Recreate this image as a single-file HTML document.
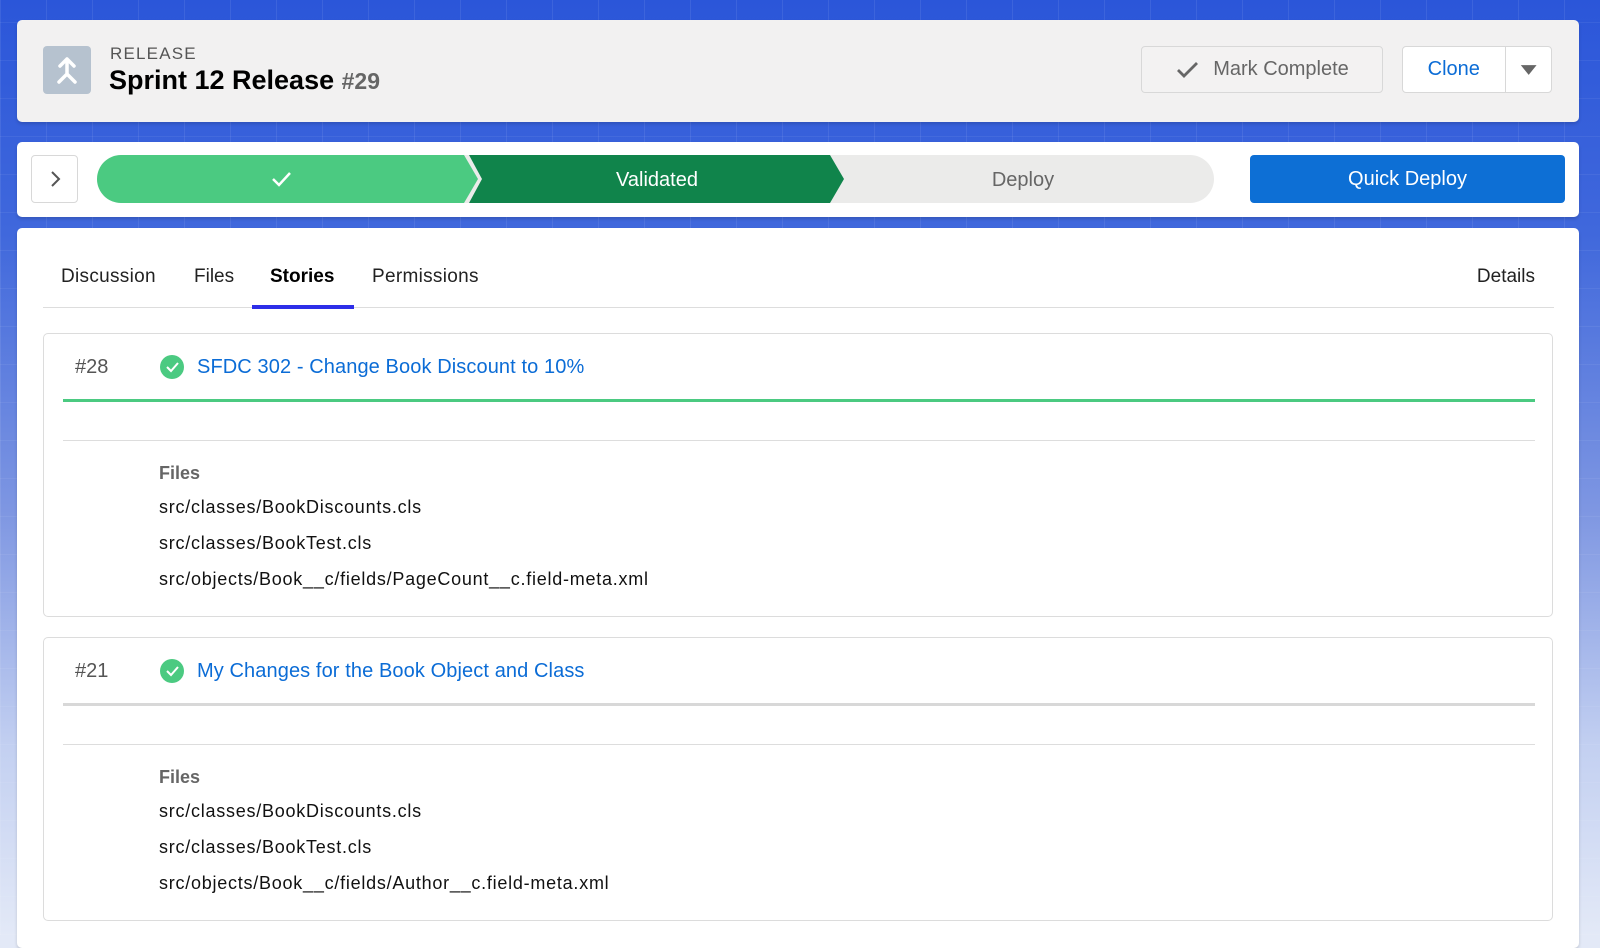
<!DOCTYPE html>
<html style="height:935px;background:#e3e9f7"><head><meta charset="utf-8"><style>
*{box-sizing:border-box;margin:0;padding:0}
body{width:1600px;height:935px;overflow:hidden;font-family:"Liberation Sans",sans-serif;background:linear-gradient(180deg,#2b56d9 0%,#4068dc 25%,#7f97e2 55%,#c3d0f1 80%,#e3e9f7 100%) no-repeat;position:relative}
.bgpat{position:absolute;inset:0;background-image:repeating-linear-gradient(90deg,rgba(255,255,255,.08) 0 1px,transparent 1px 46px),repeating-linear-gradient(0deg,rgba(255,255,255,.06) 0 1px,transparent 1px 38px)}
.card{position:absolute;left:17px;width:1562px;border-radius:5px;box-shadow:0 2px 3px rgba(0,0,0,.15)}
.abs{position:absolute}
.btn{position:absolute;border:1px solid #d8d8d8;border-radius:4px;display:flex;align-items:center;justify-content:center;font-size:20px}
.story{position:absolute;left:43px;width:1510px;height:284px;border:1px solid #dcdcdc;border-radius:5px;background:#fff}
.num{position:absolute;left:31px;font-size:20px;color:#555}
.chk{position:absolute;left:116px;width:24px;height:24px;border-radius:50%;background:#4bca81}
.ttl{position:absolute;left:153px;font-size:20px;color:#0b6cd6;letter-spacing:.1px}
.fl{position:absolute;left:115px;font-size:18px;color:#111;letter-spacing:.75px}
</style></head><body>
<div class="bgpat"></div>

<div class="card" style="top:20px;height:102px;background:#f2f1f1">
  <div class="abs" style="left:26px;top:26px;width:48px;height:48px;background:#b6c2cf;border-radius:4px">
    <svg width="48" height="48" viewBox="0 0 48 48"><path d="M24 13v15M17 20l7-7 7 7M24 28l-8 8M24 28l8 8" stroke="#fff" stroke-width="3.5" fill="none" stroke-linecap="round" stroke-linejoin="round"/></svg>
  </div>
  <div class="abs" style="left:93px;top:24px;font-size:17px;letter-spacing:1.2px;color:#555">RELEASE</div>
  <div class="abs" style="left:92px;top:45px;font-size:27px;font-weight:bold;color:#000">Sprint 12 Release <span style="font-size:23px;color:#666">#29</span></div>
  <div class="btn" style="left:1124px;top:26px;width:242px;height:47px;background:#f3f2f2;color:#666"><svg width="26" height="20" viewBox="0 0 26 20" style="margin-right:12px"><path d="M3 10l6 6L22 3" stroke="#666" stroke-width="2.8" fill="none"/></svg>Mark Complete</div>
  <div class="btn" style="left:1385px;top:26px;width:150px;height:47px;background:#fff;justify-content:flex-start">
    <span style="width:103px;text-align:center;color:#0b6cd6">Clone</span>
    <span style="width:1px;height:45px;background:#d8d8d8"></span>
    <svg width="46" height="20" viewBox="0 0 46 20"><path d="M15 5h16l-8 10z" fill="#666"/></svg>
  </div>
</div>

<div class="card" style="top:142px;height:75px;background:#fff">
  <div class="btn" style="left:14px;top:13px;width:47px;height:48px;background:#fff">
    <svg width="20" height="20" viewBox="0 0 20 20"><path d="M7 3l7 7-7 7" stroke="#555" stroke-width="2" fill="none"/></svg>
  </div>
  <svg class="abs" style="left:80px;top:13px" width="1120" height="48" viewBox="0 0 1120 48">
    <path d="M24 0H1093a24 24 0 0 1 0 48H24a24 24 0 0 1 0-48z" fill="#ebebea"/>
    <path d="M24 0H367l14 24-14 24H24a24 24 0 0 1 0-48z" fill="#4bca81"/>
    <path d="M372 0H733l14 24-14 24H372l13-24z" fill="#10844b"/>
    <path d="M176 24l6 6 11-12" stroke="#fff" stroke-width="2.5" fill="none"/>
    <text x="560" y="31" text-anchor="middle" font-family="Liberation Sans" font-size="20" fill="#fff">Validated</text>
    <text x="926" y="31" text-anchor="middle" font-family="Liberation Sans" font-size="20" fill="#666">Deploy</text>
  </svg>
  <div class="abs" style="left:1233px;top:13px;width:315px;height:48px;background:#0d6fd5;border-radius:4px;color:#fff;font-size:20px;display:flex;align-items:center;justify-content:center">Quick Deploy</div>
</div>

<div class="card" style="top:228px;height:720px;background:#fff">
  <div class="abs" style="left:44px;top:38px;font-size:19px;color:#222;letter-spacing:.3px">Discussion</div>
  <div class="abs" style="left:177px;top:38px;font-size:19px;color:#222">Files</div>
  <div class="abs" style="left:253px;top:38px;font-size:19px;color:#000;font-weight:bold">Stories</div>
  <div class="abs" style="left:355px;top:38px;font-size:19px;color:#222;letter-spacing:.3px">Permissions</div>
  <div class="abs" style="right:44px;top:38px;font-size:19px;color:#222">Details</div>
  <div class="abs" style="left:26px;top:79px;width:1511px;height:1px;background:#ddd"></div>
  <div class="abs" style="left:235px;top:77px;width:102px;height:4px;background:#2d2ee8"></div>
</div>

<div class="story" style="top:333px">
  <div class="num" style="top:22px">#28</div>
  <div class="chk" style="top:21px"><svg width="24" height="24" viewBox="0 0 24 24"><path d="M7 12l4 4 7-8" stroke="#fff" stroke-width="2" fill="none"/></svg></div>
  <div class="ttl" style="top:22px">SFDC 302 - Change Book Discount to 10%</div>
  <div class="abs" style="left:19px;top:65px;width:1472px;height:3px;background:#4bca81"></div>
  <div class="abs" style="left:19px;top:106px;width:1472px;height:1px;background:#ddd"></div>
  <div class="fl" style="top:129px;font-weight:bold;color:#666;letter-spacing:0">Files</div>
  <div class="fl" style="top:163px">src/classes/BookDiscounts.cls</div>
  <div class="fl" style="top:199px">src/classes/BookTest.cls</div>
  <div class="fl" style="top:235px">src/objects/Book__c/fields/PageCount__c.field-meta.xml</div>
</div>

<div class="story" style="top:637px">
  <div class="num" style="top:22px">#21</div>
  <div class="chk" style="top:21px"><svg width="24" height="24" viewBox="0 0 24 24"><path d="M7 12l4 4 7-8" stroke="#fff" stroke-width="2" fill="none"/></svg></div>
  <div class="ttl" style="top:22px">My Changes for the Book Object and Class</div>
  <div class="abs" style="left:19px;top:65px;width:1472px;height:3px;background:#d8d8d8"></div>
  <div class="abs" style="left:19px;top:106px;width:1472px;height:1px;background:#ddd"></div>
  <div class="fl" style="top:129px;font-weight:bold;color:#666;letter-spacing:0">Files</div>
  <div class="fl" style="top:163px">src/classes/BookDiscounts.cls</div>
  <div class="fl" style="top:199px">src/classes/BookTest.cls</div>
  <div class="fl" style="top:235px">src/objects/Book__c/fields/Author__c.field-meta.xml</div>
</div>
</body></html>
